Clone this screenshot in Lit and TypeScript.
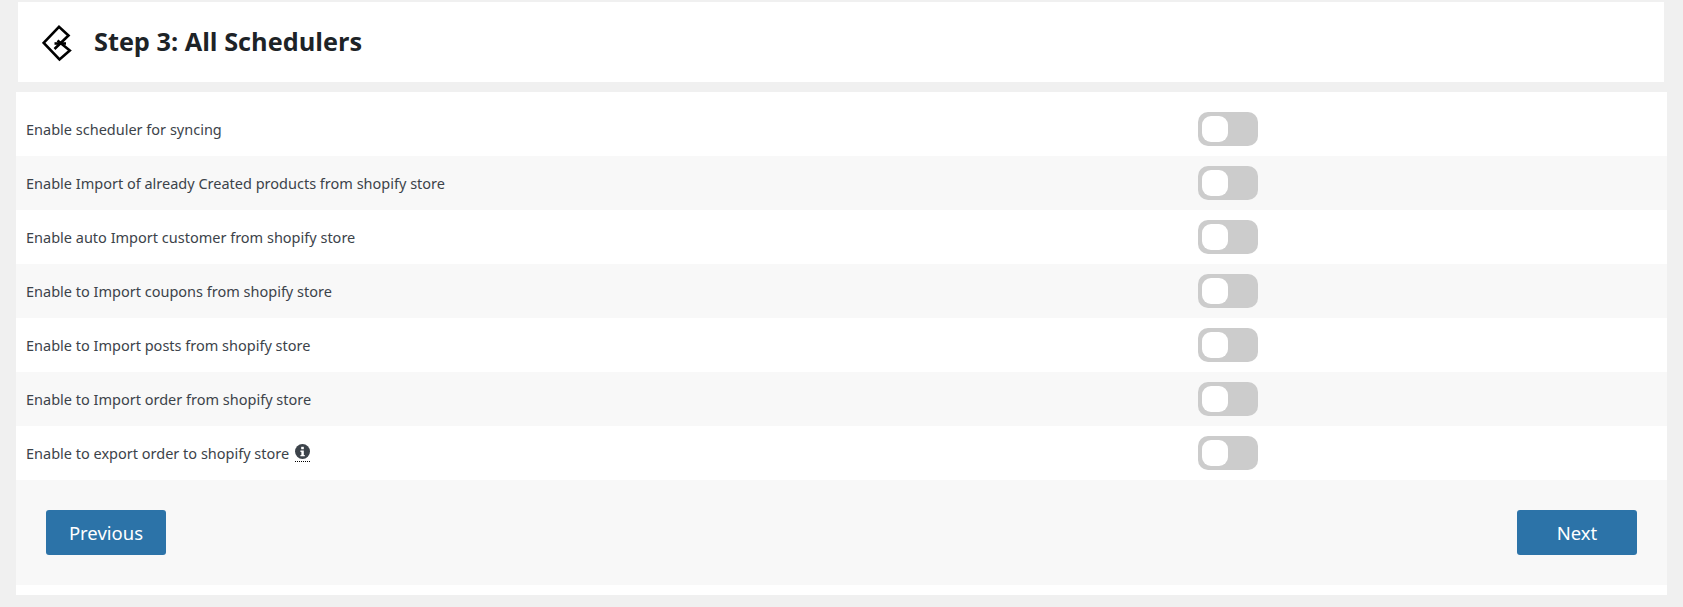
import { LitElement, html, css } from "lit";
import { customElement } from "lit/decorators.js";

const rows = [
  "Enable scheduler for syncing",
  "Enable Import of already Created products from shopify store",
  "Enable auto Import customer from shopify store",
  "Enable to Import coupons from shopify store",
  "Enable to Import posts from shopify store",
  "Enable to Import order from shopify store",
  "Enable to export order to shopify store",
];

@customElement("app-root")
export class AppRoot extends LitElement {
  static styles = css`
    :host { display: block; background: #f0f0f0; height: 607px; padding: 2px 16px 0 16px; box-sizing: border-box; font-family: "Noto Sans", "Open Sans", sans-serif; }
    .head { margin: 0 3px 0 2px; height: 80px; background: #fff; display: flex; align-items: center; padding-left: 24px; box-sizing: border-box; }
    .head svg { width: 32px; height: 40px; flex: none; display: block; }
    h1 { margin: 0 0 0 20px; font: 700 25.3px/1 "Open Sans", sans-serif; color: #1d2327; }
    .panel { margin-top: 10px; background: #fff; padding: 10px 0; }
    .row { display: grid; grid-template-columns: 1182px 60px; height: 54px; align-items: center; font-size: 14.5px; color: #3c434a; }
    .row .label { padding-left: 10px; display: flex; align-items: center; gap: 6px; }
    .row:nth-child(even) { background: #f8f8f8; }
    .toggle { width: 60px; height: 34px; border-radius: 10px; background: #ccc; padding: 4px; box-sizing: border-box; }
    .knob { width: 26px; height: 26px; border-radius: 9px; background: #fff; }
    .tip { display: inline-flex; border-bottom: 1px dotted #000; padding-bottom: 2px; }
    .tip svg { width: 15px; height: 15px; display: block; }
    .foot { background: #f8f8f8; height: 105px; display: flex; justify-content: space-between; padding: 30px 30px 0; box-sizing: border-box; }
    button { width: 120px; height: 45px; background: #2c73a8; border: 0; border-radius: 3px; color: #fff; font: 18.5px "Noto Sans", sans-serif; }
  `;

  render() {
    return html`
      <div class="head">
        <svg viewBox="42 19 32 40" fill="none" stroke="#000" stroke-width="2.6">
          <path d="M54.5 46 L68.5 32.5 L59 23.8 L43.7 39.8 L59.5 56.5 L69.8 47.5 L57.5 37.5" stroke-linejoin="miter"/>
          <path d="M54.5 40.5 H66"/>
        </svg>
        <h1>Step 3: All Schedulers</h1>
      </div>
      <div class="panel">
        ${rows.map((r, i) => html`
          <div class="row">
            <div class="label">${r}${i === 6 ? html`<span class="tip"><svg viewBox="0 0 16 16"><circle cx="8" cy="8" r="8" fill="#3c434a"/><rect x="6.6" y="3" width="2.8" height="2.6" fill="#fff"/><path d="M5.8 7h3.6v4.6h1v1.4H5.8v-1.4h1V8.4h-1z" fill="#fff"/></svg></span>` : ""}</div>
            <div class="toggle"><div class="knob"></div></div>
          </div>`)}
        <div class="foot"><button>Previous</button><button>Next</button></div>
      </div>
    `;
  }
}
